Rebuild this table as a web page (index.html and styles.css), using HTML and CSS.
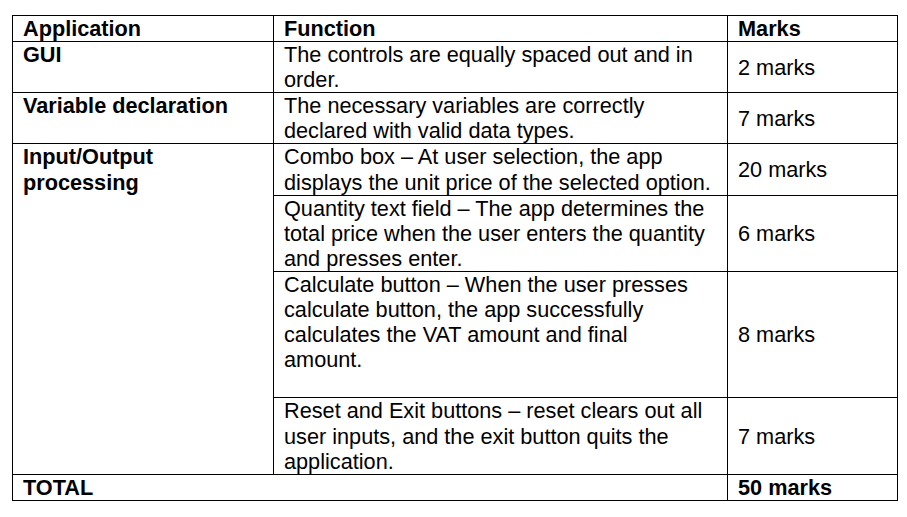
FILE: index.html
```html
<!DOCTYPE html>
<html>
<head>
<meta charset="utf-8">
<link rel="stylesheet" href="styles.css">
</head>
<body>
<table class="grid">
  <colgroup>
    <col class="c1"><col class="c2"><col class="c3">
  </colgroup>
  <tr class="r1">
    <th>Application</th>
    <th>Function</th>
    <th>Marks</th>
  </tr>
  <tr>
    <td class="app">GUI</td>
    <td>The controls are equally spaced out and in<br>order.</td>
    <td class="mark">2 marks</td>
  </tr>
  <tr>
    <td class="app">Variable declaration</td>
    <td>The necessary variables are correctly<br>declared with valid data types.</td>
    <td class="mark">7 marks</td>
  </tr>
  <tr>
    <td class="app" rowspan="4">Input/Output<br>processing</td>
    <td>Combo box – At user selection, the app<br>displays the unit price of the selected option.</td>
    <td class="mark">20 marks</td>
  </tr>
  <tr>
    <td>Quantity text field – The app determines the<br>total price when the user enters the quantity<br>and presses enter.</td>
    <td class="mark">6 marks</td>
  </tr>
  <tr>
    <td>Calculate button – When the user presses<br>calculate button, the app successfully<br>calculates the VAT amount and final<br>amount.<br>&nbsp;</td>
    <td class="mark">8 marks</td>
  </tr>
  <tr>
    <td>Reset and Exit buttons – reset clears out all<br>user inputs, and the exit button quits the<br>application.</td>
    <td class="mark">7 marks</td>
  </tr>
  <tr class="total">
    <td class="app" colspan="2">TOTAL</td>
    <td class="app">50 marks</td>
  </tr>
</table>
</body>
</html>
```
FILE: styles.css
```css
html, body {
  margin: 0;
  padding: 0;
  background: #ffffff;
}
body {
  padding: 15px 0 0 12px;
  font-family: "Liberation Sans", Arial, sans-serif;
  color: #000;
}
.grid {
  border-collapse: collapse;
  table-layout: fixed;
  width: 885px;
  font-size: 21.7px;
  line-height: 25.1px;
}
.c1 { width: 261px; }
.c2 { width: 454px; }
.c3 { width: 170px; }
.grid th, .grid td {
  border: 1px solid #000;
  padding: 0 0 0 10px;
  text-align: left;
  vertical-align: top;
  white-space: nowrap;
  font-weight: normal;
}
.grid th, .grid .app {
  font-weight: bold;
}
.grid .mark {
  vertical-align: middle;
}
```
